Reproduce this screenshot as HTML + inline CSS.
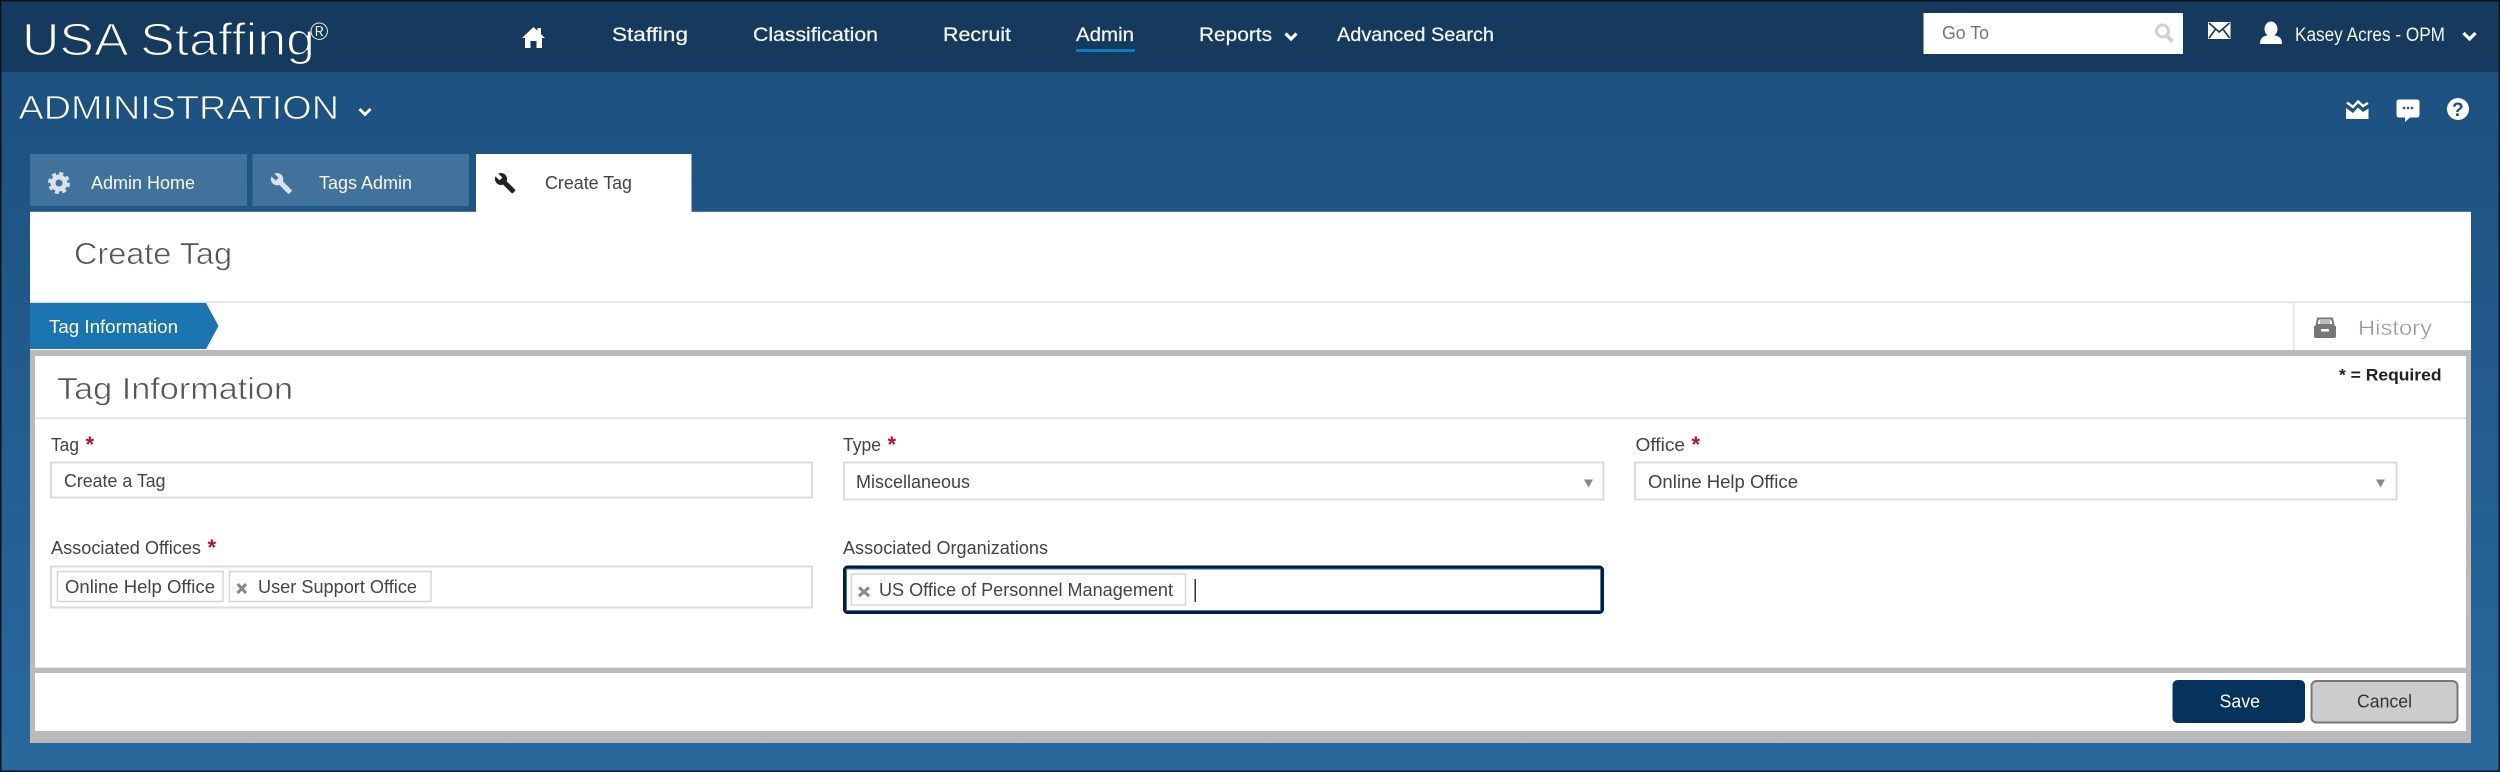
<!DOCTYPE html>
<html lang="en">
<head>
<meta charset="utf-8">
<title>USA Staffing - Create Tag</title>
<style>
html,body{margin:0;padding:0;width:2500px;height:772px;overflow:hidden;background:#1c5280}
svg{display:block}
text{font-family:"Liberation Sans",sans-serif;white-space:pre}
.nav{font-size:19.5px;fill:#f2f5f8;stroke:#f2f5f8;stroke-width:.25}
.lab{font-size:18.5px;fill:#444}
.val{font-size:18.5px;fill:#444}
.req{font-size:22px;fill:#b8122b;font-weight:700}
.tab{font-size:18px;fill:#f4f7fa}
.h{font-size:31px;fill:#555;stroke:#fff;stroke-width:.6}
.box{fill:#fff;stroke:#dcdcdc;stroke-width:2}
.chip{fill:#fff;stroke:#d6d6d6;stroke-width:1.5}
.x{stroke:#888;stroke-width:3;fill:none}
</style>
</head>
<body>
<svg width="2500" height="772" viewBox="0 0 2500 772" xmlns="http://www.w3.org/2000/svg">
<defs>
<linearGradient id="bg" x1="0" y1="72" x2="0" y2="772" gradientUnits="userSpaceOnUse">
<stop offset="0" stop-color="#1c5180"/><stop offset="1" stop-color="#2a689c"/>
</linearGradient>
<path id="wr" d="M22.7 19l-9.1-9.1c.9-2.3.4-5-1.5-6.9-2-2-5-2.4-7.4-1.3L9 6 6 9 1.6 4.7C.4 7.1.9 10.1 2.9 12.1c1.9 1.9 4.6 2.4 6.9 1.5l9.1 9.1c.4.4 1 .4 1.4 0l2.3-2.3c.5-.4.5-1.100.1-1.400z"/>
</defs>

<!-- backgrounds -->
<rect width="2500" height="772" fill="url(#bg)"/>
<rect width="2500" height="72" fill="#163a5d"/>

<!-- logo -->
<text x="22" y="55" font-size="45" fill="#fff" stroke="#163a5d" stroke-width="1.300" textLength="293" lengthAdjust="spacingAndGlyphs">USA Staffing</text>
<text x="310" y="40" font-size="25" fill="#fff" stroke="#163a5d" stroke-width=".3">®</text>

<!-- nav -->
<path d="M533.5 27 L537.5 30.8 V28 H541 V34.2 L545 38 H542 V48 H536.5 V41 H530.5 V48 H525 V38 H522 Z" fill="#fff"/>
<text class="nav" x="612" y="41" textLength="76" lengthAdjust="spacingAndGlyphs">Staffing</text>
<text class="nav" x="753" y="41" textLength="125" lengthAdjust="spacingAndGlyphs">Classification</text>
<text class="nav" x="943" y="41" textLength="68" lengthAdjust="spacingAndGlyphs">Recruit</text>
<text class="nav" x="1076" y="41" textLength="58" lengthAdjust="spacingAndGlyphs">Admin</text>
<rect x="1076" y="49" width="59" height="3" fill="#0b7cb8"/>
<text class="nav" x="1199" y="41" textLength="73" lengthAdjust="spacingAndGlyphs">Reports</text>
<path d="M1285.5 33.5 L1291 39 L1296.5 33.5" fill="none" stroke="#fff" stroke-width="3.2"/>
<text class="nav" x="1337" y="41" textLength="157" lengthAdjust="spacingAndGlyphs">Advanced Search</text>

<!-- go to -->
<rect x="1923.5" y="13" width="259.5" height="41" fill="#fff"/>
<text x="1942" y="39" font-size="18" fill="#777" textLength="47" lengthAdjust="spacingAndGlyphs">Go To</text>
<circle cx="2162.5" cy="31" r="6" fill="none" stroke="#d0d0d0" stroke-width="3"/>
<path d="M2167 36 L2172.5 41.5" stroke="#d0d0d0" stroke-width="4" fill="none"/>

<!-- mail -->
<rect x="2208" y="22" width="22.5" height="17" fill="#fff"/>
<path d="M2209 23 L2219.2 32 L2229.5 23 M2209 38 L2216 28.5 M2229.5 38 L2222.5 28.5" fill="none" stroke="#163a5d" stroke-width="1.6"/>

<!-- user -->
<ellipse cx="2271" cy="29" rx="6.5" ry="7.5" fill="#fff"/>
<path d="M2260 44 C2260 38 2263 36 2267 35.5 H2275 C2279 36 2282 38 2282 44 Z" fill="#fff"/>
<text x="2295" y="41" font-size="19" fill="#f2f5f8" textLength="150" lengthAdjust="spacingAndGlyphs">Kasey Acres - OPM</text>
<path d="M2463.5 33 L2469.5 39 L2475.5 33" fill="none" stroke="#fff" stroke-width="3.2"/>

<!-- administration -->
<text x="18.5" y="119" font-size="33.5" fill="#fff" stroke="#1c5280" stroke-width=".8" textLength="320.5" lengthAdjust="spacingAndGlyphs">ADMINISTRATION</text>
<path d="M359.5 109 L365 114.5 L370.5 109" fill="none" stroke="#fff" stroke-width="2.8"/>

<!-- utility icons -->
<path d="M2347 102.5 L2353 107 L2358 101.5 L2363 106 L2368 103" fill="none" stroke="#fff" stroke-width="2.4"/>
<path d="M2346 108 L2353 113 L2358 107.5 L2363 112 L2368.5 108.5 V119 H2346 Z" fill="#fff"/>
<path d="M2399 99.5 H2417 Q2419.5 99.5 2419.5 102 V115 Q2419.5 117.5 2417 117.5 H2410 L2405 122 V117.5 H2399 Q2396.5 117.5 2396.5 115 V102 Q2396.5 99.5 2399 99.5 Z" fill="#fff"/>
<circle cx="2404" cy="108" r="1.3" fill="#1d5482"/><circle cx="2408" cy="108" r="1.3" fill="#1d5482"/><circle cx="2412" cy="108" r="1.3" fill="#1d5482"/>
<circle cx="2458" cy="109" r="11" fill="#fff"/>
<text x="2452" y="116" font-size="19" font-weight="700" fill="#1d5482">?</text>

<!-- tabs -->
<rect x="30" y="154" width="217" height="52" fill="#40729b"/>
<rect x="252.5" y="154" width="216.5" height="52" fill="#40729b"/>
<rect x="476" y="154" width="215.5" height="58" fill="#fff"/>
<circle cx="59" cy="183" r="6" fill="none" stroke="#d8e2ea" stroke-width="5"/>
<circle cx="59" cy="183" r="9.5" fill="none" stroke="#d8e2ea" stroke-width="3" stroke-dasharray="4 3.46"/>
<text class="tab" x="91" y="189" textLength="104" lengthAdjust="spacingAndGlyphs">Admin Home</text>
<use href="#wr" transform="translate(270,172) scale(.95)" fill="#d8e2ea"/>
<text class="tab" x="319" y="189" textLength="93" lengthAdjust="spacingAndGlyphs">Tags Admin</text>
<use href="#wr" transform="translate(494,172) scale(.93)" fill="#222"/>
<text class="tab" x="545" y="189" style="fill:#444" textLength="87" lengthAdjust="spacingAndGlyphs">Create Tag</text>

<!-- main panel -->
<rect x="30" y="212" width="2441" height="138" fill="#fff"/>
<rect x="30" y="211" width="446" height="1" fill="#4a7ca6"/>
<rect x="691.5" y="211" width="1779.5" height="1" fill="#4a7ca6"/>
<text class="h" x="74" y="264" textLength="158" lengthAdjust="spacingAndGlyphs">Create Tag</text>
<rect x="30" y="301.5" width="2441" height="1.5" fill="#dcdcdc"/>

<!-- step -->
<path d="M30 303 H206 L218.5 326 L206 349 H30 Z" fill="#1a75b0"/>
<text x="49" y="333" font-size="18" fill="#fff" textLength="129" lengthAdjust="spacingAndGlyphs">Tag Information</text>

<!-- history -->
<rect x="2293" y="303" width="1.5" height="47" fill="#e2e2e2"/>
<path d="M2318 318.5 H2332 L2333.5 325 H2316.5 Z" fill="none" stroke="#777" stroke-width="2"/>
<path d="M2320 321 H2330 M2320 323 H2330" stroke="#777" stroke-width="1"/>
<path d="M2314 326 H2336 V336 Q2336 338 2334 338 H2316 Q2314 338 2314 336 Z" fill="#777"/>
<rect x="2321" y="329" width="8" height="2.5" fill="#fff"/>
<text x="2358" y="335" font-size="21" fill="#999" stroke="#fff" stroke-width=".4" textLength="74" lengthAdjust="spacingAndGlyphs">History</text>

<!-- gray frame -->
<rect x="30" y="350" width="2441" height="393" fill="#bababa"/>
<rect x="35" y="356" width="2431" height="311" fill="#fff"/>
<rect x="35" y="667" width="2431" height="1" fill="#e8e8e8"/>
<rect x="35" y="673" width="2431" height="58" fill="#fff"/>

<text class="h" x="57" y="399" textLength="236" lengthAdjust="spacingAndGlyphs">Tag Information</text>
<text x="2339" y="380.5" font-size="17" font-weight="700" fill="#222" textLength="102.5" lengthAdjust="spacingAndGlyphs">* = Required</text>
<rect x="35" y="417.5" width="2431" height="1.5" fill="#dcdcdc"/>

<!-- Tag -->
<text class="lab" x="51" y="451" textLength="28" lengthAdjust="spacingAndGlyphs">Tag</text>
<text class="req" x="85.5" y="452">*</text>
<rect class="box" x="51" y="462.5" width="761" height="35"/>
<text class="val" x="64" y="487" textLength="101.5" lengthAdjust="spacingAndGlyphs">Create a Tag</text>

<!-- Type -->
<text class="lab" x="843" y="451" textLength="38" lengthAdjust="spacingAndGlyphs">Type</text>
<text class="req" x="887.5" y="452">*</text>
<rect class="box" x="844" y="462.5" width="759.5" height="37"/>
<text class="val" x="856" y="488" textLength="114" lengthAdjust="spacingAndGlyphs">Miscellaneous</text>
<path d="M1584 479.5 H1593 L1588.5 487.5 Z" fill="#888"/>

<!-- Office -->
<text class="lab" x="1635.5" y="451" textLength="49.5" lengthAdjust="spacingAndGlyphs">Office</text>
<text class="req" x="1691.5" y="452">*</text>
<rect class="box" x="1635" y="462.5" width="761.5" height="37"/>
<text class="val" x="1648" y="488" textLength="150" lengthAdjust="spacingAndGlyphs">Online Help Office</text>
<path d="M2376 479.5 H2385 L2380.5 487.5 Z" fill="#888"/>

<!-- Associated Offices -->
<text class="lab" x="51" y="554" textLength="150" lengthAdjust="spacingAndGlyphs">Associated Offices</text>
<text class="req" x="207.5" y="555">*</text>
<rect class="box" x="51" y="566.5" width="761" height="41"/>
<rect class="chip" x="57.5" y="571.5" width="165.5" height="30"/>
<text class="val" x="65" y="593" textLength="150" lengthAdjust="spacingAndGlyphs">Online Help Office</text>
<rect class="chip" x="229.5" y="571.5" width="201.5" height="30"/>
<path class="x" d="M237.5 584 L246 593 M246 584 L237.5 593"/>
<text class="val" x="258" y="593" textLength="159" lengthAdjust="spacingAndGlyphs">User Support Office</text>

<!-- Associated Organizations -->
<text class="lab" x="843" y="554" textLength="205" lengthAdjust="spacingAndGlyphs">Associated Organizations</text>
<rect x="844.5" y="567" width="758" height="45.5" rx="3" fill="#fff" stroke="#0a1a33" stroke-width="3"/>
<rect x="846.5" y="569" width="754" height="41.500" rx="1" fill="none" stroke="#2a7de1" stroke-width="1"/>
<rect class="chip" x="851.5" y="574" width="334" height="31"/>
<path class="x" d="M859 587.5 L869 596 M869 587.5 L859 596"/>
<text class="val" x="879" y="596" textLength="294" lengthAdjust="spacingAndGlyphs">US Office of Personnel Management</text>
<rect x="1194.500" y="579" width="1.500" height="23" fill="#333"/>

<!-- buttons -->
<rect x="2172.5" y="680" width="132.5" height="43" rx="5" fill="#06335b"/>
<text x="2219.5" y="707.5" font-size="18" fill="#fff" textLength="40.5" lengthAdjust="spacingAndGlyphs">Save</text>
<rect x="2311.5" y="681" width="146" height="41.5" rx="5" fill="#ccc" stroke="#777" stroke-width="2"/>
<text x="2357" y="707.5" font-size="18" fill="#333" textLength="55" lengthAdjust="spacingAndGlyphs">Cancel</text>

<!-- screenshot border -->
<rect x=".75" y=".75" width="2498.5" height="770.5" fill="none" stroke="#0a1420" stroke-width="1.5"/>
</svg>
</body>
</html>
